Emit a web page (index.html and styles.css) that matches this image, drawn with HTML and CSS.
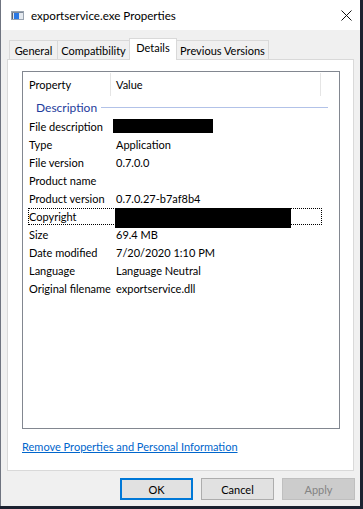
FILE: index.html
```html
<!DOCTYPE html>
<html>
<head>
<meta charset="utf-8">
<link rel="stylesheet" href="styles.css">
</head>
<body>
<div class="window">
  <div class="titlebar">
    <svg class="app-icon" width="13" height="9" viewBox="0 0 13 9">
      <rect x="0.5" y="0.5" width="12" height="8" fill="#e4e9ef" stroke="#9aa4b0"/>
      <rect x="1" y="1" width="11" height="1" fill="#7f8a99"/>
      <rect x="1" y="2" width="1" height="6" fill="#5b6472"/>
      <rect x="3" y="2" width="5" height="6" fill="#2a78e4"/>
    </svg>
    <span class="title">exportservice.exe Properties</span>
    <svg class="close" width="11" height="11" viewBox="0 0 11 11">
      <path d="M0.5 0.5 L10.5 10.5 M10.5 0.5 L0.5 10.5" stroke="#111" stroke-width="1" fill="none"/>
    </svg>
  </div>

  <div class="tabs">
    <div class="tab t-general">General</div>
    <div class="tab t-compat">Compatibility</div>
    <div class="tab active t-details">Details</div>
    <div class="tab t-prev">Previous Versions</div>
  </div>

  <div class="panel">
    <div class="list">
      <div class="list-header">
        <div class="h-prop">Property</div>
        <div class="h-val">Value</div>
      </div>
      <div class="group">
        <span class="group-name">Description</span>
        <span class="group-line"></span>
      </div>
      <div class="row"><div class="item"><span class="prop">File description</span><span class="val"></span><span class="redact r-desc"></span></div></div>
      <div class="row"><div class="item"><span class="prop">Type</span><span class="val">Application</span></div></div>
      <div class="row"><div class="item"><span class="prop">File version</span><span class="val">0.7.0.0</span></div></div>
      <div class="row"><div class="item"><span class="prop">Product name</span><span class="val"></span></div></div>
      <div class="row"><div class="item"><span class="prop">Product version</span><span class="val">0.7.0.27-b7af8b4</span></div></div>
      <div class="row"><div class="item focused"><span class="prop">Copyright</span><span class="val"></span><span class="redact r-copy"></span></div></div>
      <div class="row"><div class="item"><span class="prop">Size</span><span class="val">69.4 MB</span></div></div>
      <div class="row"><div class="item"><span class="prop">Date modified</span><span class="val">7/20/2020 1:10 PM</span></div></div>
      <div class="row"><div class="item"><span class="prop">Language</span><span class="val">Language Neutral</span></div></div>
      <div class="row"><div class="item"><span class="prop">Original filename</span><span class="val">exportservice.dll</span></div></div>
    </div>
    <a class="link" href="#">Remove Properties and Personal Information</a>
  </div>

  <div class="buttons">
    <div class="btn default">OK</div>
    <div class="btn">Cancel</div>
    <div class="btn disabled">Apply</div>
  </div>
</div>
</body>
</html>
```

FILE: styles.css
```css
html, body {
  margin: 0;
  padding: 0;
}
body {
  width: 363px;
  height: 509px;
  background: #1c2230;
  font-family: "Lato", "Noto Sans", sans-serif;
  font-size: 11px;
  color: #000;
  overflow: hidden;
}
.window {
  box-sizing: border-box;
  width: 360px;
  height: 506px;
  background: #f0f0f0;
  border-left: 1px solid #6f7480;
}
.titlebar {
  height: 30px;
  background: #fff;
  display: flex;
  align-items: center;
  position: relative;
}
.app-icon {
  margin-left: 10px;
  margin-top: 1px;
  display: block;
}
.title {
  margin-left: 7px;
  font-size: 11.6px;
}
.close {
  margin-left: auto;
  margin-right: 8px;
  display: block;
}
.tabs {
  display: flex;
  align-items: flex-end;
  margin-top: 8px;
  margin-left: 8px;
  height: 21px;
  position: relative;
  z-index: 2;
}
.tab {
  box-sizing: border-box;
  height: 19px;
  border: 1px solid #d9d9d9;
  border-bottom: none;
  background: #f0f0f0;
  display: flex;
  align-items: center;
  justify-content: center;
  margin-left: -1px;
  padding-top: 1px;
  white-space: nowrap;
}
.t-general { width: 49px; margin-left: 0; }
.t-compat { width: 73px; }
.t-details { width: 48px; }
.t-prev { width: 93px; }
.tab.active {
  height: 22px;
  background: #fff;
  margin-bottom: -1px;
  padding-top: 0;
  padding-bottom: 4px;
  position: relative;
  z-index: 3;
}
.panel {
  box-sizing: border-box;
  margin-left: 6px;
  width: 347px;
  height: 412px;
  background: #fff;
  border: 1px solid #d9d9d9;
  padding: 11px 13px 0 14px;
  position: relative;
  z-index: 1;
}
.list {
  box-sizing: border-box;
  height: 358px;
  border: 1px solid #828790;
  background: #fff;
}
.list-header {
  display: flex;
  height: 25px;
  align-items: center;
}
.h-prop {
  box-sizing: border-box;
  width: 88px;
  padding-left: 6px;
  height: 23px;
  line-height: 23px;
  border-right: 1px solid #e5e5e5;
}
.h-val {
  box-sizing: border-box;
  width: 210px;
  padding-left: 5px;
  height: 23px;
  line-height: 23px;
  border-right: 1px solid #e5e5e5;
}
.group {
  display: flex;
  align-items: center;
  height: 21px;
  padding-left: 13px;
  padding-right: 11px;
}
.group-name {
  color: #1e3c9c;
  font-size: 12px;
}
.group-line {
  flex: 1;
  height: 1px;
  background: #b2c2e8;
  margin-left: 4px;
}
.row {
  height: 18px;
}
.item {
  box-sizing: border-box;
  margin-left: 5px;
  width: 294px;
  height: 17px;
  border: 1px dotted transparent;
  display: flex;
  align-items: center;
  position: relative;
}
.item.focused {
  border-color: #000;
}
.prop {
  width: 87px;
  flex: none;
  white-space: nowrap;
}
.val {
  white-space: nowrap;
}
.redact {
  position: absolute;
  background: #000;
}
.r-desc {
  left: 84px;
  top: 0;
  width: 100px;
  height: 14px;
}
.r-copy {
  left: 86px;
  top: -1px;
  width: 176px;
  height: 20px;
}
.link {
  display: block;
  margin-top: 10px;
  line-height: 16px;
  color: #0066cc;
  text-decoration: underline;
  width: max-content;
}
.buttons {
  display: flex;
  justify-content: flex-end;
  gap: 8px;
  margin-top: 7px;
  padding-right: 5px;
}
.btn {
  box-sizing: border-box;
  width: 73px;
  height: 22px;
  background: #e1e1e1;
  border: 1px solid #adadad;
  display: flex;
  align-items: center;
  justify-content: center;
}
.btn.default {
  border: 2px solid #0078d7;
}
.btn.disabled {
  background: #cccccc;
  border-color: #bfbfbf;
  color: #838383;
}
```
